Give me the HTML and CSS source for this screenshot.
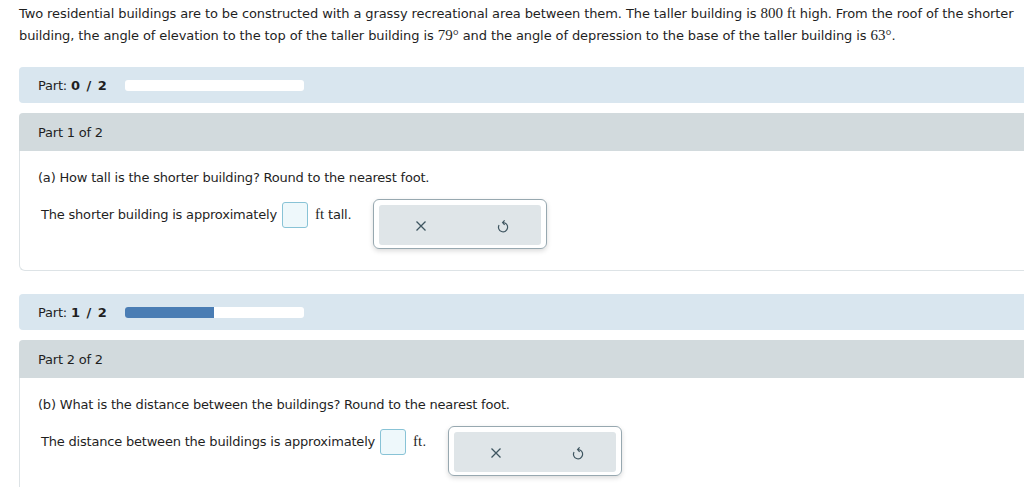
FILE: index.html
```html
<!DOCTYPE html>
<html>
<head>
<meta charset="utf-8">
<link rel="stylesheet" href="styles.css">
</head>
<body>
<div class="page">
  <p class="stem">Two residential buildings are to be constructed with a grassy recreational area between them. The taller building is <span class="math">800 ft</span> high. From the roof of the shorter building, the angle of elevation to the top of the taller building is <span class="math">79°</span> and the angle of depression to the base of the taller building is <span class="math">63°</span>.</p>

  <div class="partbar">
    <span>Part: <b>0 &thinsp;/&thinsp; 2</b></span>
    <div class="progress"><div class="fill" style="width:0%"></div></div>
  </div>
  <div class="part">
    <div class="part-head">Part 1 of 2</div>
    <div class="part-body">
      <p class="q">(a) How tall is the shorter building? Round to the nearest foot.</p>
      <div class="answer-row">
        <span class="ans-text">The shorter building is approximately</span>
        <span class="box"></span>
        <span class="ans-text"><span class="math">ft</span> tall.</span>
        <div class="tools">
          <div class="tools-inner">
            <svg class="ico" viewBox="0 0 12 12" width="12" height="12"><path d="M1.5 1.5 L10.5 10.5 M10.5 1.5 L1.5 10.5" stroke="#3e5560" stroke-width="1.3" fill="none"/></svg>
            <svg class="ico" viewBox="0 0 12 14" width="12" height="14"><path d="M6 3.6 A4.6 4.6 0 1 1 2 6" stroke="#3e5560" stroke-width="1.2" fill="none"/><path d="M7.6 1.4 L5.6 3.6 L7.6 5.8" stroke="#3e5560" stroke-width="1.2" fill="none"/></svg>
          </div>
        </div>
      </div>
    </div>
  </div>

  <div class="partbar second">
    <span>Part: <b>1 &thinsp;/&thinsp; 2</b></span>
    <div class="progress"><div class="fill" style="width:50%"></div></div>
  </div>
  <div class="part">
    <div class="part-head">Part 2 of 2</div>
    <div class="part-body">
      <p class="q">(b) What is the distance between the buildings? Round to the nearest foot.</p>
      <div class="answer-row">
        <span class="ans-text">The distance between the buildings is approximately</span>
        <span class="box"></span>
        <span class="ans-text"><span class="math">ft</span>.</span>
        <div class="tools">
          <div class="tools-inner">
            <svg class="ico" viewBox="0 0 12 12" width="12" height="12"><path d="M1.5 1.5 L10.5 10.5 M10.5 1.5 L1.5 10.5" stroke="#3e5560" stroke-width="1.3" fill="none"/></svg>
            <svg class="ico" viewBox="0 0 12 14" width="12" height="14"><path d="M6 3.6 A4.6 4.6 0 1 1 2 6" stroke="#3e5560" stroke-width="1.2" fill="none"/><path d="M7.6 1.4 L5.6 3.6 L7.6 5.8" stroke="#3e5560" stroke-width="1.2" fill="none"/></svg>
          </div>
        </div>
      </div>
    </div>
  </div>
</div>
</body>
</html>
```

FILE: styles.css
```css
html, body {
  margin: 0;
  padding: 0;
  background: #fff;
  overflow: hidden;
}
body {
  font-family: "DejaVu Sans", Verdana, sans-serif;
  font-size: 13px;
  letter-spacing: -0.2px;
  color: #1f1f1f;
}
.page {
  padding: 3px 0 0 19px;
  width: 1030px;
}
.stem {
  margin: 0;
  line-height: 22px;
  width: 1000px;
  letter-spacing: -0.1px;
}
.math {
  font-family: "Liberation Serif", "Times New Roman", serif;
  font-size: 15px;
  line-height: 1;
  letter-spacing: 0;
}
.partbar {
  margin-top: 20px;
  height: 36px;
  background: #d9e6ef;
  border-radius: 4px 0 0 4px;
  display: flex;
  align-items: center;
  padding-left: 19px;
  gap: 18px;
}
.partbar.second {
  margin-top: 23px;
}
.progress {
  width: 179px;
  height: 11px;
  background: #fff;
  border-radius: 3px;
  overflow: hidden;
}
.fill {
  height: 100%;
  background: #4a7db4;
}
.part {
  margin-top: 10px;
}
.part-head {
  height: 38px;
  background: #d2dadd;
  border-radius: 4px 0 0 0;
  display: flex;
  align-items: center;
  padding-left: 19px;
}
.part-body {
  border-left: 1px solid #dde3e6;
  border-bottom: 1px solid #dde3e6;
  border-radius: 0 0 0 6px;
  padding: 18px 0 21px 18px;
}
.q {
  margin: 0;
  line-height: 18px;
}
.answer-row {
  display: flex;
  align-items: flex-start;
  margin-top: 15px;
  padding-left: 3px;
}
.ans-text {
  line-height: 26px;
}
.box {
  width: 24px;
  height: 24px;
  border: 1px solid #88c3d6;
  border-radius: 3px;
  background: #eef8fb;
  margin: 0 7px 0 5px;
}
.tools {
  margin-left: 22px;
  margin-top: -3px;
  border: 1px solid #97a8b0;
  border-radius: 6px;
  box-shadow: 0 2px 5px rgba(0,0,0,0.15);
  padding: 5px;
  box-sizing: border-box;
  width: 174px;
  height: 50px;
}
.tools-inner {
  height: 100%;
  background: #dfe5e8;
  border-radius: 3px;
  display: flex;
  align-items: center;
  gap: 70px;
  padding: 2px 0 0 36px;
}
.ico {
  display: block;
}
```
